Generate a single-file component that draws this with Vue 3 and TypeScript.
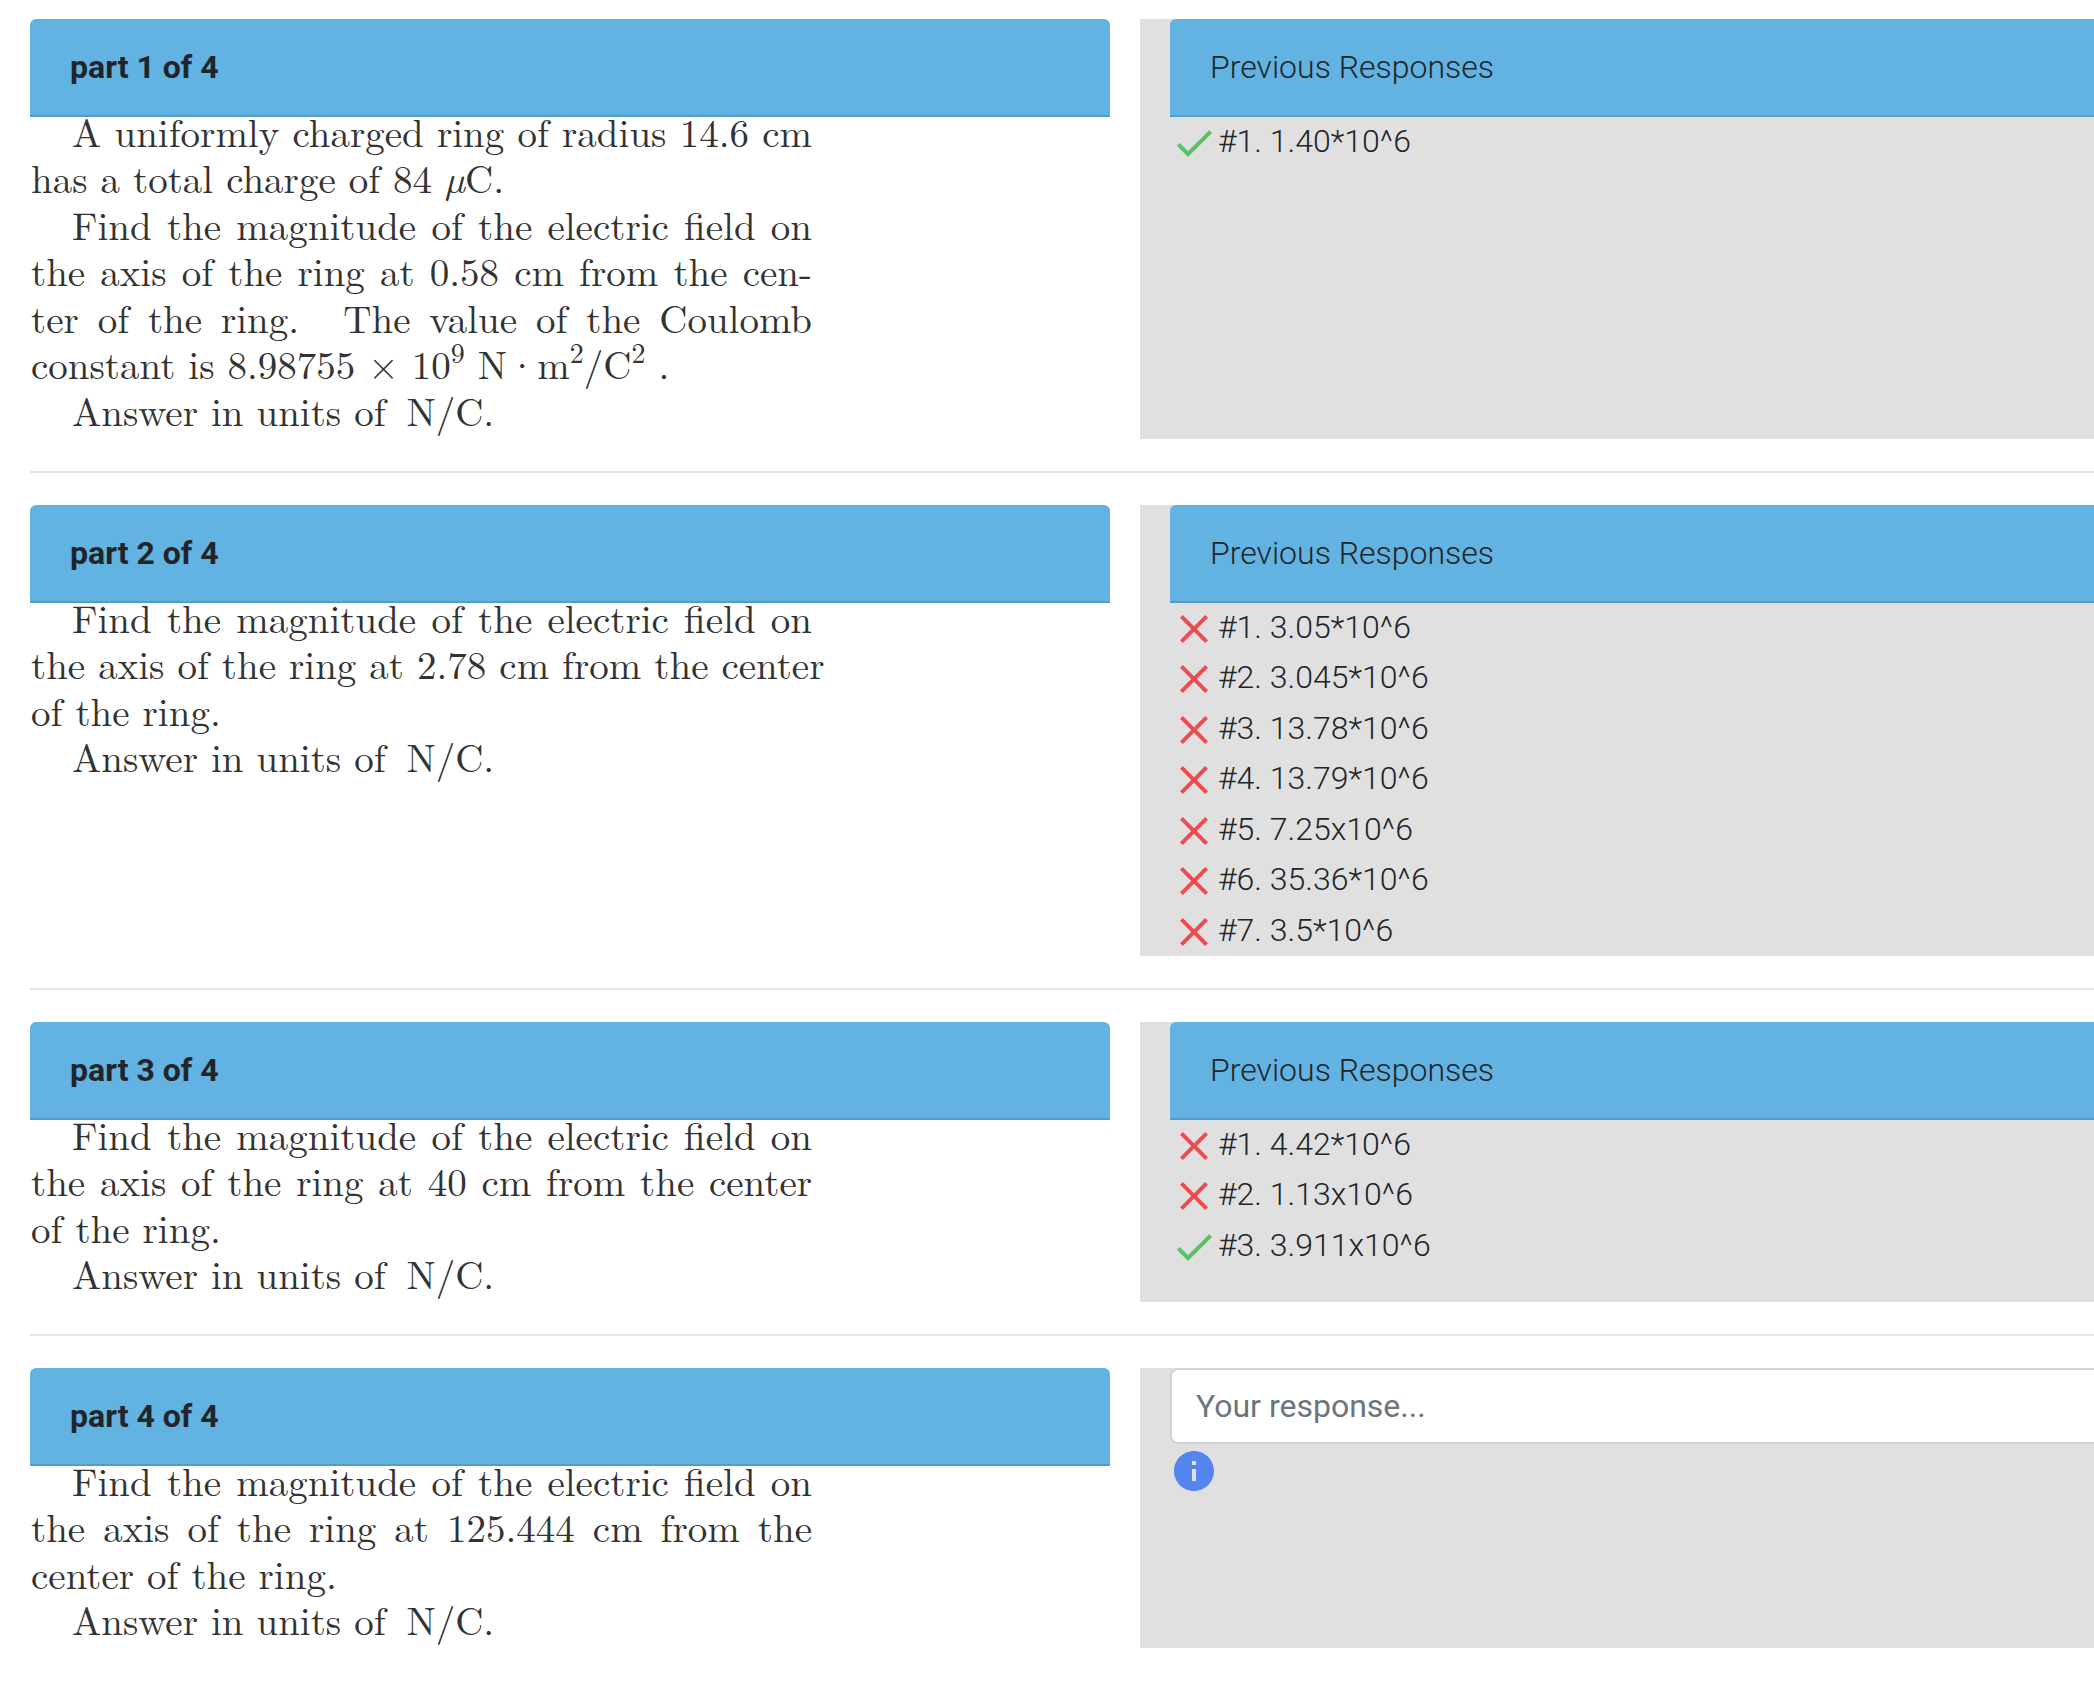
<script setup lang="ts">
type PartKind = 'text' | 'sup' | 'var'

interface TextPart {
  kind: PartKind
  text: string
}

interface Line {
  parts: TextPart[]
  indent?: boolean
  full?: boolean
}

interface Attempt {
  value: string
  correct: boolean
}

interface Part {
  number: number
  lines: Line[]
  attempts: Attempt[]
}

const t = (text: string): TextPart => ({ kind: 'text', text })
const sup = (text: string): TextPart => ({ kind: 'sup', text })
const variable = (text: string): TextPart => ({ kind: 'var', text })

const start = (text: string): Line => ({ parts: [t(text)], indent: true, full: true })
const full = (text: string): Line => ({ parts: [t(text)], full: true })
const last = (...parts: TextPart[]): Line => ({ parts })
const units: Line = { parts: [t('Answer in units of \u2009N/C.')], indent: true }

const right = (value: string): Attempt => ({ value, correct: true })
const wrong = (value: string): Attempt => ({ value, correct: false })

const parts: Part[] = [
  {
    number: 1,
    lines: [
      start('A uniformly charged ring of radius 14.6 cm'),
      last(t('has a total charge of 84 '), variable('µ'), t('C.')),
      start('Find the magnitude of the electric field on'),
      full('the axis of the ring at 0.58 cm from the cen-'),
      full('ter of the ring. \u00a0The value of the Coulomb'),
      last(t('constant is 8.98755 × 10'), sup('9'), t(' N·m'), sup('2'), t('/C'), sup('2'), t(' .')),
      units,
    ],
    attempts: [right('1.40*10^6')],
  },
  {
    number: 2,
    lines: [
      start('Find the magnitude of the electric field on'),
      full('the axis of the ring at 2.78 cm from the center'),
      last(t('of the ring.')),
      units,
    ],
    attempts: [
      wrong('3.05*10^6'),
      wrong('3.045*10^6'),
      wrong('13.78*10^6'),
      wrong('13.79*10^6'),
      wrong('7.25x10^6'),
      wrong('35.36*10^6'),
      wrong('3.5*10^6'),
    ],
  },
  {
    number: 3,
    lines: [
      start('Find the magnitude of the electric field on'),
      full('the axis of the ring at 40 cm from the center'),
      last(t('of the ring.')),
      units,
    ],
    attempts: [wrong('4.42*10^6'), wrong('1.13x10^6'), right('3.911x10^6')],
  },
  {
    number: 4,
    lines: [
      start('Find the magnitude of the electric field on'),
      full('the axis of the ring at 125.444 cm from the'),
      last(t('center of the ring.')),
      units,
    ],
    attempts: [],
  },
]

const tagFor: Record<PartKind, string> = { text: 'span', sup: 'sup', var: 'i' }
</script>

<template>
  <main class="assignment">
    <template v-for="part in parts" :key="part.number">
      <hr v-if="part.number > 1" class="divider" />
      <section class="part">
        <div class="question">
          <h2 class="bar bar-title">part {{ part.number }} of {{ parts.length }}</h2>
          <div class="statement">
            <p
              v-for="(line, i) in part.lines"
              :key="i"
              class="line"
              :class="{ indent: line.indent, full: line.full }"
            ><component
                :is="tagFor[piece.kind]"
                v-for="(piece, j) in line.parts"
                :key="j"
                :class="piece.kind"
              >{{ piece.text }}</component></p>
          </div>
        </div>

        <div class="answers">
          <template v-if="part.attempts.length">
            <h3 class="bar bar-open">Previous Responses</h3>
            <ul class="attempts">
              <li v-for="(attempt, i) in part.attempts" :key="i" class="attempt">
                <svg v-if="attempt.correct" class="icon correct" viewBox="0 0 24 24" role="img" aria-label="Correct">
                  <path d="M9 16.17L4.83 12l-1.42 1.41L9 19 21 7l-1.41-1.41z" />
                </svg>
                <svg v-else class="icon incorrect" viewBox="0 0 24 24" role="img" aria-label="Incorrect">
                  <path d="M19 6.41L17.59 5 12 10.59 6.41 5 5 6.41 10.59 12 5 17.59 6.41 19 12 13.41 17.59 19 19 17.59 13.41 12z" />
                </svg>
                <span>#{{ i + 1 }}. {{ attempt.value }}</span>
              </li>
            </ul>
          </template>
          <template v-else>
            <input class="response" type="text" placeholder="Your response..." aria-label="Your response" />
            <button class="info" type="button" aria-label="Answer format help">
              <svg class="icon" viewBox="0 0 24 24" aria-hidden="true">
                <path d="M12 2C6.48 2 2 6.48 2 12s4.48 10 10 10 10-4.48 10-10S17.52 2 12 2zm1 15h-2v-6h2v6zm0-8h-2V7h2v2z" />
              </svg>
            </button>
          </template>
        </div>
      </section>
    </template>
  </main>
</template>

<style>
body {
  margin: 0;
  background: #fff;
}
</style>

<style scoped>
.assignment {
  padding: 19px 0 32px;
  color: #212529;
  font-family: Roboto, sans-serif;
  font-size: 32px;
  font-weight: 300;
  line-height: 48px;
}

.divider {
  height: 2px;
  margin: 32px 0 32px 30px;
  border: 0;
  background: #e5e5e5;
}

.part {
  display: grid;
  grid-template-columns: 190fr 159fr;
}

.question {
  padding: 0 30px;
}

.answers {
  padding-left: 30px;
  background: #e0e0e0;
}

.bar {
  margin: 0;
  padding: 24px 40px;
  border-bottom: 2px solid #549dc8;
  border-radius: 6px 6px 0 0;
  background: #62b3e1;
  font-size: 32px;
  font-weight: 300;
}

.bar-title {
  font-weight: 700;
}

.bar-open {
  border-top-right-radius: 0;
}

.statement {
  max-width: 781px;
  margin-top: -10px;
  padding: 0 0 6px 1px;
  color: #333;
  font-family: "Latin Modern Roman", "CMU Serif", "Liberation Serif", serif;
  font-size: 39px;
  font-weight: 400;
}

.line {
  margin: 0;
  line-height: 46px;
  white-space: nowrap;
}

.line:nth-child(odd) {
  line-height: 47px;
}

.indent {
  padding-left: 41px;
}

.full {
  text-align: justify;
  text-align-last: justify;
}

.sup {
  font-size: 28px;
  line-height: 0;
  vertical-align: 16px;
}

.attempts {
  margin: 0;
  padding: 0;
  list-style: none;
}

.attempt {
  display: flex;
  align-items: flex-start;
  height: 50px;
}

.attempt:nth-child(even) {
  height: 51px;
}

.icon {
  display: block;
  flex: none;
  width: 48px;
  height: 48px;
  fill: currentColor;
}

.attempt .icon {
  margin-top: 2px;
}

.correct {
  color: #57c462;
}

.incorrect {
  color: #ef4b4e;
}

.response {
  display: block;
  box-sizing: border-box;
  width: 100%;
  height: 76px;
  padding: 0 24px;
  border: 2px solid #ced4da;
  border-right: 0;
  border-radius: 8px 0 0 8px;
  background: #fff;
  color: #495057;
  font: 400 32px/48px Roboto, sans-serif;
}

.response::placeholder {
  color: #6c757d;
  opacity: 1;
}

.info {
  display: block;
  margin-top: 3px;
  padding: 0;
  border: 0;
  background: none;
  color: #5585ef;
  cursor: pointer;
}
</style>
